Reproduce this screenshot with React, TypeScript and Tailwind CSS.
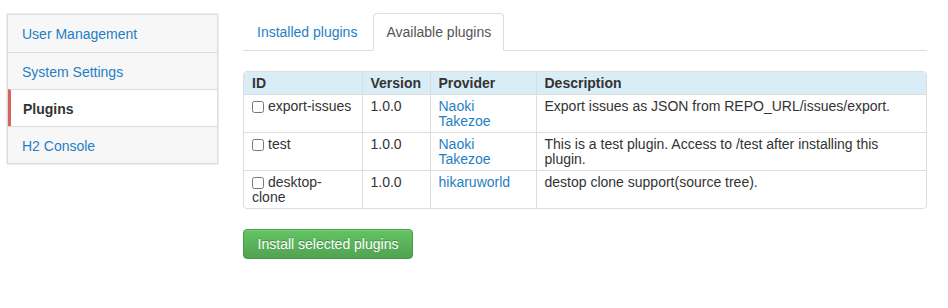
import { useState } from "react";

interface Plugin {
  id: string;
  version: string;
  provider: string;
  description: string;
}

const PLUGINS: Plugin[] = [
  {
    id: "export-issues",
    version: "1.0.0",
    provider: "Naoki Takezoe",
    description: "Export issues as JSON from REPO_URL/issues/export.",
  },
  {
    id: "test",
    version: "1.0.0",
    provider: "Naoki Takezoe",
    description:
      "This is a test plugin. Access to /test after installing this plugin.",
  },
  {
    id: "desktop-clone",
    version: "1.0.0",
    provider: "hikaruworld",
    description: "destop clone support(source tree).",
  },
];

const MENU = ["User Management", "System Settings", "Plugins", "H2 Console"];

export default function App() {
  const [tab, setTab] = useState("available");
  const [checked, setChecked] = useState<string[]>([]);

  const toggle = (id: string) =>
    setChecked((c) => (c.includes(id) ? c.filter((x) => x !== id) : [...c, id]));

  return (
    <div className="flex w-[948px] h-[308px] bg-white font-['Liberation_Sans',Arial,sans-serif] text-[14px] text-[#333]">
      {/* side menu */}
      <div className="ml-[6px] mt-[13px] w-[213px] self-start rounded-[2px] border border-[#eeeeee] p-0">
        <ul className="border border-[#dddddd] bg-[#f7f7f7]">
          {MENU.map((m, i) => (
            <li
              key={m}
              className={
                (i > 0 ? "border-t border-[#dddddd] " : "") +
                (m === "Plugins"
                  ? "bg-white border-l-[3px] border-l-[#d9645f] pl-[12px] font-bold text-[#333]"
                  : "pl-[14px] text-[#1f7fc5]")
              }
            >
              <a className={"block cursor-pointer " + (i === 0 ? "h-[37px] leading-[39px]" : "h-[36px] leading-[38px]")}>
                {m}
              </a>
            </li>
          ))}
        </ul>
      </div>

      {/* main */}
      <div className="ml-[24px] mt-[13px] w-[684px]">
        <div className="flex border-b border-[#dddddd]">
          <button
            onClick={() => setTab("installed")}
            className={
              "mr-[2px] -mb-px h-[38px] rounded-t-[4px] border px-[13px] leading-[36px] " +
              (tab === "installed"
                ? "border-[#dddddd] border-b-white bg-white text-[#555]"
                : "border-transparent text-[#1f7fc5]")
            }
          >
            Installed plugins
          </button>
          <button
            onClick={() => setTab("available")}
            className={
              "-mb-px h-[38px] rounded-t-[4px] border px-[12px] leading-[36px] " +
              (tab === "available"
                ? "border-[#dddddd] border-b-white bg-white text-[#555]"
                : "border-transparent text-[#1f7fc5]")
            }
          >
            Available plugins
          </button>
        </div>

        <div className="mt-[20px] overflow-hidden rounded-[4px] border border-[#dddddd]">
          <table className="w-full table-fixed border-collapse text-left leading-[15px]">
            <colgroup>
              <col className="w-[118px]" />
              <col className="w-[68px]" />
              <col className="w-[106px]" />
              <col />
            </colgroup>
            <thead>
              <tr className="bg-[#d9edf7]">
                <th className="px-[8px] py-[3px] leading-[16px] font-bold">ID</th>
                <th className="border-l border-[#dddddd] px-[8px] py-[3px] leading-[16px] font-bold">
                  Version
                </th>
                <th className="border-l border-[#dddddd] px-[8px] py-[3px] leading-[16px] font-bold">
                  Provider
                </th>
                <th className="border-l border-[#dddddd] px-[8px] py-[3px] leading-[16px] font-bold">
                  Description
                </th>
              </tr>
            </thead>
            <tbody>
              {PLUGINS.map((p) => (
                <tr key={p.id} className="border-t border-[#dddddd] align-top">
                  <td className="h-[36px] px-[8px] pt-[4px] pb-[3px]">
                    <label className="cursor-pointer">
                      <input
                        type="checkbox"
                        checked={checked.includes(p.id)}
                        onChange={() => toggle(p.id)}
                        className="relative top-[2px] mr-[4px] h-[12px] w-[12px] accent-[#888]"
                      />
                      {p.id}
                    </label>
                  </td>
                  <td className="border-l border-[#dddddd] px-[8px] pt-[4px] pb-[3px]">
                    {p.version}
                  </td>
                  <td className="border-l border-[#dddddd] px-[8px] pt-[4px] pb-[3px]">
                    <a className="cursor-pointer text-[#1f7fc5]">{p.provider}</a>
                  </td>
                  <td className="border-l border-[#dddddd] px-[8px] pt-[4px] pb-[3px]">
                    {p.description}
                  </td>
                </tr>
              ))}
            </tbody>
          </table>
        </div>

        <button className="mt-[20px] h-[30px] w-[170px] rounded-[4px] border border-[#459a45] bg-gradient-to-b from-[#62c462] to-[#51a351] text-[14px] text-white [text-shadow:0_-1px_0_rgba(0,0,0,0.25)] shadow-[inset_0_1px_0_rgba(255,255,255,0.2)]">
          Install selected plugins
        </button>
      </div>
    </div>
  );
}
